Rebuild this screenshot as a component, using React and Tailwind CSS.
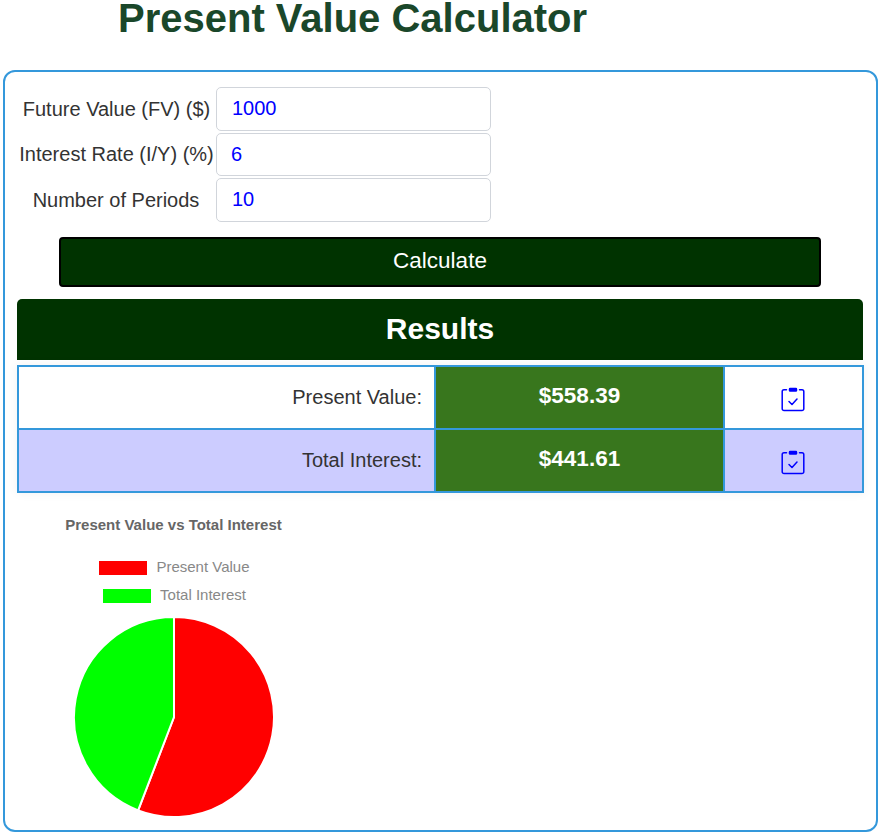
import React from 'react';

const FONT = "font-['Liberation_Sans',Arial,sans-serif]";

const FIELDS = [
  { label: 'Future Value (FV) ($)', value: '1000', pad: 'pl-[15px]' },
  { label: 'Interest Rate (I/Y) (%)', value: '6', pad: 'pl-[14px]' },
  { label: 'Number of Periods', value: '10', pad: 'pl-[15px]', labelPad: 'pr-[1px]' },
];

const RESULTS = [
  { label: 'Present Value:', value: '$558.39', bg: 'bg-white' },
  { label: 'Total Interest:', value: '$441.61', bg: 'bg-[#ccccff]' },
];

function ClipboardIcon() {
  return (
    <svg width="24" height="26" viewBox="0 0 24 26" fill="none" stroke="#0000ff" strokeWidth="1.5" strokeLinecap="round" strokeLinejoin="round">
      <path d="M5.5 2.8H3a1.8 1.8 0 0 0-1.8 1.8v17.2A1.8 1.8 0 0 0 3 23.6h18a1.8 1.8 0 0 0 1.8-1.8V4.6A1.8 1.8 0 0 0 21 2.8h-2.5" />
      <rect x="8.5" y="1.6" width="7" height="2.4" rx="0.6" fill="#0000ff" />
      <path d="M8 14.5l3 3 5-5.5" />
    </svg>
  );
}

function polar(cx, cy, r, frac) {
  const a = frac * 2 * Math.PI;
  return [cx + r * Math.sin(a), cy - r * Math.cos(a)];
}

function PieChart() {
  const [x, y] = polar(102, 102, 100, 0.5584);
  return (
    <svg width="204" height="204" viewBox="0 0 204 204">
      <path d={`M102 102L102 2A100 100 0 1 1 ${x} ${y}Z`} fill="#ff0000" stroke="#fff" strokeWidth="2" />
      <path d={`M102 102L${x} ${y}A100 100 0 0 1 102 2Z`} fill="#00ff00" stroke="#fff" strokeWidth="2" />
    </svg>
  );
}

function LegendItem({ color, label }) {
  return (
    <div className="flex items-center h-[28px] gap-[9px]">
      <span className={`w-[48px] h-[14px] ${color}`} />
      <span className="text-[15px] text-[#888888]">{label}</span>
    </div>
  );
}

export default function App() {
  return (
    <div className={`${FONT} w-[880px] h-[838px] bg-white overflow-hidden`}>
      <h1 className="text-[40px] leading-[36px] font-bold text-[#1a472a] pl-[118px] h-[70px]">
        Present Value Calculator
      </h1>

      <div className="ml-[3px] w-[875px] h-[762px] border-2 border-[#3498db] rounded-[12px] px-[12px] pt-[14px]">
        <div className="flex flex-col">
          {FIELDS.map((f) => (
            <div key={f.label} className="flex h-[45.5px] items-center">
              <label className={`w-[199px] text-center text-[20px] text-[#333333] whitespace-nowrap ${f.labelPad || ''}`}>
                {f.label}
              </label>
              <input
                readOnly
                value={f.value}
                className={`w-[275px] h-[43.5px] border border-[#d1d5db] rounded-[5px] text-[20px] text-[#0000ff] outline-none ${f.pad}`}
              />
            </div>
          ))}
        </div>

        <button className="block ml-[42px] mt-[14px] w-[762px] h-[50px] bg-[#003300] border-2 border-black rounded-[4px] text-[22.5px] text-white pb-[1px]">
          Calculate
        </button>

        <div className="mt-[12px] w-[846px] h-[61px] bg-[#003300] rounded-t-[5px] flex items-center justify-center text-[30px] font-bold text-white pb-[2px]">
          Results
        </div>

        <table className="mt-[5px] w-[845px] table-fixed border-collapse shadow-[0_0_10px_rgba(0,0,0,0.06)]">
          <colgroup>
            <col className="w-[417px]" />
            <col className="w-[289px]" />
            <col className="w-[139px]" />
          </colgroup>
          <tbody>
            {RESULTS.map((r) => (
              <tr key={r.label} className={`h-[63px] ${r.bg}`}>
                <td className="border-2 border-[#3498db] pr-[12px] text-right text-[20px] text-[#333333]">{r.label}</td>
                <td className="border-2 border-[#3498db] bg-[#38761d] text-center text-[22.5px] font-bold text-white pb-[2px]">{r.value}</td>
                <td className="border-2 border-[#3498db]">
                  <div className="flex justify-center pt-[6px] pr-[1px]">
                    <ClipboardIcon />
                  </div>
                </td>
              </tr>
            ))}
          </tbody>
        </table>

        <div className="w-[313px] flex flex-col items-center mt-[22px]">
          <div className="text-[15px] leading-[20px] font-bold text-[#666666]">Present Value vs Total Interest</div>
          <div className="mt-[19px] pl-[2px] flex flex-col items-center">
            <LegendItem color="bg-[#ff0000]" label="Present Value" />
            <LegendItem color="bg-[#00ff00]" label="Total Interest" />
          </div>
          <div className="mt-[5px]">
            <PieChart />
          </div>
        </div>
      </div>
    </div>
  );
}
